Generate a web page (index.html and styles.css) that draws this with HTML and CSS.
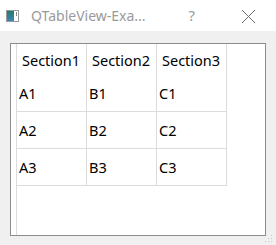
FILE: index.html
```html
<!DOCTYPE html>
<html>
<head>
<meta charset="utf-8">
<link rel="stylesheet" href="styles.css">
</head>
<body>
<div class="window">
  <div class="titlebar">
    <svg class="app-icon" width="13" height="12" viewBox="0 0 13 12">
      <defs>
        <linearGradient id="g" x1="0" y1="0" x2="0" y2="1">
          <stop offset="0" stop-color="#2a7a64"/>
          <stop offset="1" stop-color="#3d84b8"/>
        </linearGradient>
      </defs>
      <rect x="0.5" y="0.5" width="12" height="11" fill="#fff" stroke="#9a9a9a"/>
      <rect x="1" y="1" width="7" height="10" fill="url(#g)"/>
      <rect x="10" y="2" width="1" height="4" fill="#8a8a8a"/>
    </svg>
    <span class="title">QTableView-Exa...</span>
    <span class="help">?</span>
    <svg class="close" width="15" height="15" viewBox="0 0 15 15">
      <path d="M1 1 L14 14 M14 1 L1 14" stroke="#6f6f6f" stroke-width="1" fill="none"/>
    </svg>
  </div>
  <div class="content">
    <div class="frame">
      <div class="gutter"></div>
      <div class="table">
        <div class="hcell">Section1</div>
        <div class="hcell">Section2</div>
        <div class="hcell">Section3</div>
        <div class="cell">A1</div>
        <div class="cell">B1</div>
        <div class="cell">C1</div>
        <div class="cell">A2</div>
        <div class="cell">B2</div>
        <div class="cell">C2</div>
        <div class="cell">A3</div>
        <div class="cell">B3</div>
        <div class="cell">C3</div>
      </div>
    </div>
  </div>
  <svg class="grip" width="9" height="9" viewBox="0 0 9 9">
    <rect x="7" y="1" width="1" height="1" fill="#c8c8c8"/>
    <rect x="4" y="4" width="1" height="1" fill="#c8c8c8"/>
    <rect x="7" y="4" width="1" height="1" fill="#c8c8c8"/>
    <rect x="1" y="7" width="1" height="1" fill="#c8c8c8"/>
    <rect x="4" y="7" width="1" height="1" fill="#c8c8c8"/>
    <rect x="7" y="7" width="1" height="1" fill="#c8c8c8"/>
  </svg>
</div>
</body>
</html>
```
FILE: styles.css
```css
* { box-sizing: border-box; }
html, body { margin: 0; padding: 0; }
body {
  background: #f0f0f0;
  font-family: "Noto Sans", "Open Sans", sans-serif;
  color: #000;
}
.window {
  position: relative;
  width: 276px;
  height: 245px;
  background: #f0f0f0;
}
.titlebar {
  height: 31px;
  background: #fff;
  display: flex;
  align-items: center;
}
.app-icon {
  margin-left: 6px;
  margin-top: 1px;
  flex: none;
}
.title {
  flex: 1;
  margin-left: 12px;
  font-size: 14px;
  color: #9a9a9a;
  white-space: nowrap;
  margin-top: -1px;
}
.help {
  font-size: 15px;
  color: #9a9a9a;
  margin-top: -1px;
  margin-right: 46px;
}
.close {
  margin-right: 20px;
  margin-top: 1px;
  flex: none;
}
.content {
  padding: 12px 10px 9px 10px;
}
.frame {
  height: 193px;
  width: 256px;
  border: 1px solid #8c8c8c;
  background: #fff;
  display: flex;
  align-items: stretch;
}
.gutter {
  width: 6px;
  border-right: 1px solid #dcdcdc;
  flex: none;
}
.table {
  display: grid;
  grid-template-columns: 70px 70px 70px;
  grid-template-rows: 31px 37px 37px 37px;
  align-content: start;
}
.hcell {
  border-right: 1px solid #dcdcdc;
  font-size: 14.5px;
  padding-left: 5px;
  display: flex;
  align-items: center;
  white-space: nowrap;
}
.cell {
  border-right: 1px solid #dcdcdc;
  border-bottom: 1px solid #dcdcdc;
  font-size: 14.5px;
  padding-left: 2px;
  display: flex;
  align-items: center;
}
.grip {
  position: absolute;
  right: 3px;
  bottom: 2px;
}
```
